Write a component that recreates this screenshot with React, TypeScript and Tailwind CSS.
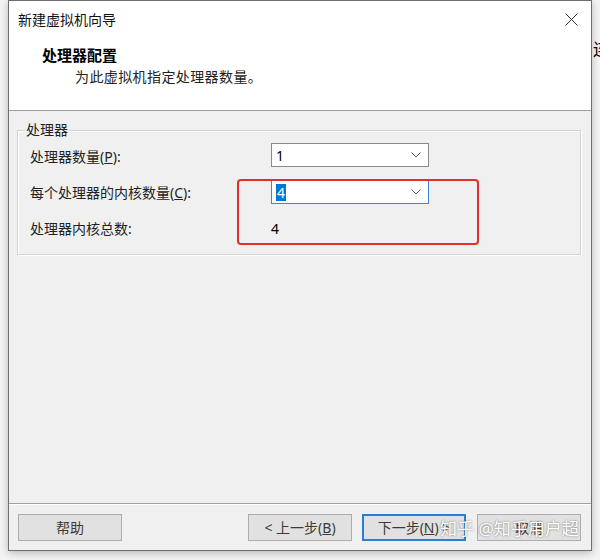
import React from 'react'

const font = "font-['Noto_Sans','Noto_Sans_CJK_SC',sans-serif]"

function Chevron() {
  return (
    <svg width="10" height="6" viewBox="0 0 10 6" className="mr-[7px]">
      <polyline points="0.5,0.5 5,5 9.5,0.5" fill="none" stroke="#606060" strokeWidth="1" />
    </svg>
  )
}

function Combo({ value, focused }: { value: string; focused?: boolean }) {
  return (
    <div
      className={`w-[158px] h-[24px] bg-white border flex items-center justify-between pl-[4px] ${
        focused ? 'border-[#3c87d6]' : 'border-[#8a8a8a]'
      }`}
    >
      {focused ? (
        <span className="bg-[#0078d7] text-white leading-[17px] text-[14px] px-[1px]">{value}</span>
      ) : (
        <span className="text-[14px] leading-[17px] text-black">{value}</span>
      )}
      <Chevron />
    </div>
  )
}

function Button({ children, primary }: { children: React.ReactNode; primary?: boolean }) {
  return (
    <div
      className={`h-[27px] w-[104px] bg-[#e1e1e1] flex items-center justify-center text-[14px] text-[#3a3a3a] ${
        primary ? 'border-2 border-[#2a7fd4]' : 'border border-[#adadad]'
      }`}
    >
      {children}
    </div>
  )
}

export default function App() {
  return (
    <div className={`w-[600px] h-[560px] bg-[#f4f4f4] relative overflow-hidden flex ${font}`}>
      <div className="ml-[8px] w-[584px] h-[551px] border border-[#6f6f6f] bg-[#f0f0f0] flex flex-col shadow-[0_2px_8px_rgba(0,0,0,0.25)]">
        {/* header */}
        <div className="h-[110px] bg-white border-b border-[#a0a0a0] flex flex-col">
          <div className="h-[37px] flex items-center justify-between pl-[9px] pr-[13px]">
            <span className="text-[14px] leading-[18px] text-[#111]">新建虚拟机向导</span>
            <svg width="13" height="13" viewBox="0 0 13 13">
              <path d="M0.5 0.5 L12.5 12.5 M12.5 0.5 L0.5 12.5" stroke="#333" strokeWidth="1" />
            </svg>
          </div>
          <div className="pl-[33px] mt-[7px] text-[15px] leading-[20px] font-bold text-black">处理器配置</div>
          <div className="pl-[66px] mt-[2px] text-[14px] leading-[20px] tracking-[0.4px] text-[#222]">
            为此虚拟机指定处理器数量。
          </div>
        </div>

        {/* body */}
        <div className="flex-1 pt-[19px]">
          <div className="relative ml-[8px] w-[564px] h-[125px] border border-[#d3d3d3] shadow-[inset_1px_1px_0_#fff,1px_1px_0_#fff] pt-[12px] pl-[12px] flex flex-col gap-[13px]">
            <span className="absolute left-[7px] top-[-10px] bg-[#f0f0f0] px-[1px] text-[14px] leading-[18px] text-[#222]">
              处理器
            </span>
            <div className="flex items-center h-[24px]">
              <div className="w-[241px] text-[14px] leading-[18px] text-[#222] pt-[3px]">
                处理器数量(<span className="underline">P</span>):
              </div>
              <Combo value="1" />
            </div>
            <div className="flex items-center h-[24px]">
              <div className="w-[241px] text-[14px] leading-[18px] text-[#222] pt-[2px]">
                每个处理器的内核数量(<span className="underline">C</span>):
              </div>
              <Combo value="4" focused />
            </div>
            <div className="flex items-center h-[24px]">
              <div className="w-[241px] text-[14px] leading-[18px] text-[#222]">处理器内核总数:</div>
              <span className="text-[14px] leading-[18px] text-black">4</span>
            </div>
            <div className="absolute left-[219px] top-[48px] w-[242px] h-[66px] border-2 border-[#e0302e] rounded-[4px]" />
          </div>
        </div>

        {/* footer */}
        <div className="h-[47px] border-t border-[#a0a0a0] shadow-[inset_0_1px_0_#fff] pt-[10px] pl-[9px] pr-[10px] flex">
          <Button>帮助</Button>
          <div className="flex-1" />
          <Button>
            &lt; 上一步(<span className="underline">B</span>)
          </Button>
          <div className="w-[10px]" />
          <Button primary>
            下一步(<span className="underline">N</span>) &gt;
          </Button>
          <div className="w-[11px]" />
          <Button>取消</Button>
        </div>
      </div>

      {/* background window peeking at the right */}
      <div className="flex-1 overflow-hidden pt-[38px] pl-[1px]">
        <span className="text-[17px] leading-[20px] text-black">连</span>
      </div>

      {/* watermark */}
      <div className="absolute left-[440px] top-[518px] text-[17px] leading-[22px] text-white [text-shadow:0_0_2px_rgba(0,0,0,0.55)]">
        知乎 @知乎用户超
      </div>
    </div>
  )
}
